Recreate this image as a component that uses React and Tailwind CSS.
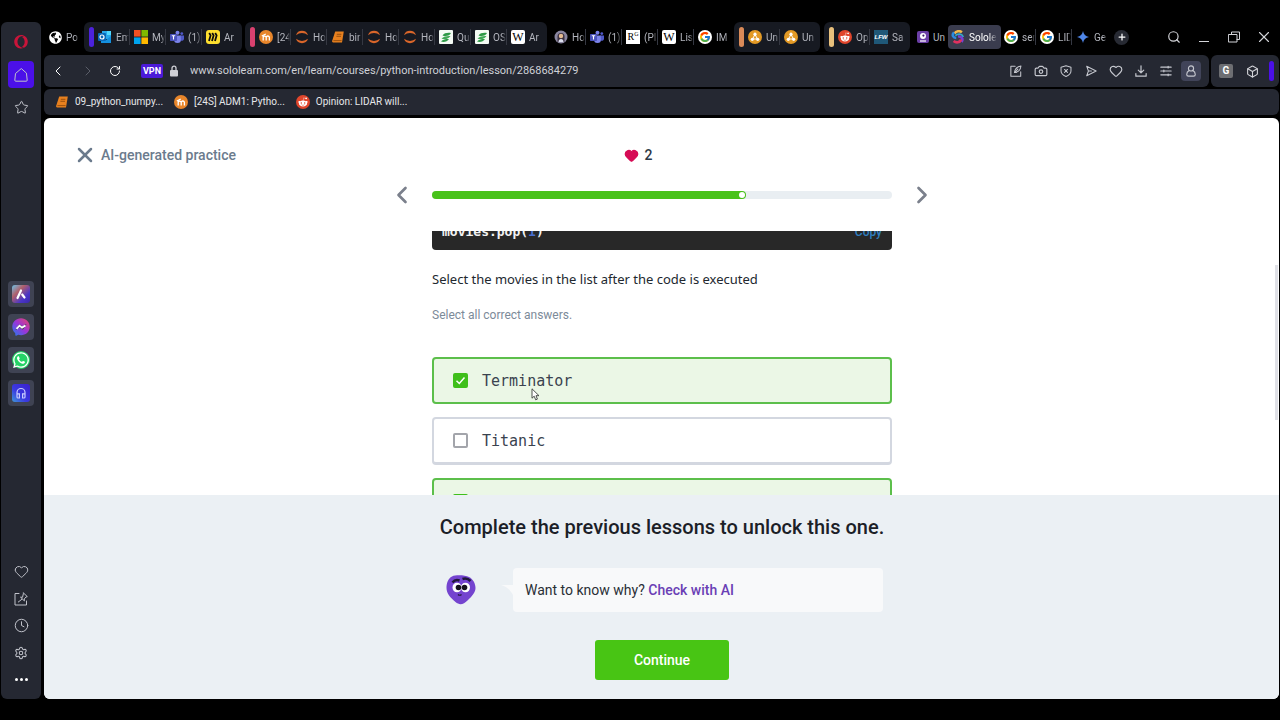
import { useState } from 'react';
import {
  Box,
  Camera,
  ChevronLeft,
  ChevronRight,
  Clock,
  Heart,
  Plus,
  RotateCw,
  Search,
  Settings,
  Star,
  X,
} from 'lucide-react';
import { FaFacebookMessenger, FaGlobeAmericas, FaOpera, FaRedditAlien, FaWhatsapp } from 'react-icons/fa';
import { FcGoogle } from 'react-icons/fc';

/* ---------- favicons ---------- */

const GlobeIcon = () => (
  <span className="flex size-3.5 items-center justify-center">
    <FaGlobeAmericas size={13} color="#fff" />
  </span>
);

const OutlookIcon = () => (
  <svg viewBox="0 0 14 14" className="size-3.5">
    <rect x="4" y="1" width="9" height="8" fill="#28a8ea" />
    <rect x="9" y="1" width="4" height="4" fill="#50d9ff" />
    <path d="M3 6l5 4 5-4v7H3z" fill="#1490df" />
    <rect x="0" y="3" width="8" height="8" rx="1" fill="#0a68b8" />
    <circle cx="4" cy="7" r="2" fill="none" stroke="#fff" strokeWidth="1.2" />
  </svg>
);

const MicrosoftIcon = () => (
  <svg viewBox="0 0 14 14" className="size-3.5">
    <path d="M0 0h6.6v6.6H0z" fill="#f25022" />
    <path d="M7.4 0H14v6.6H7.4z" fill="#7fba00" />
    <path d="M0 7.4h6.6V14H0z" fill="#00a4ef" />
    <path d="M7.4 7.4H14V14H7.4z" fill="#ffb900" />
  </svg>
);

const TeamsIcon = () => (
  <svg viewBox="0 0 14 14" className="size-3.5">
    <circle cx="7.5" cy="2.8" r="2" fill="#7b83eb" />
    <circle cx="11.8" cy="3.6" r="1.4" fill="#5059c9" />
    <path d="M4 5.5h7v4a3.5 3.5 0 0 1-7 0z" fill="#7b83eb" />
    <path d="M10.5 5.5H14v3.2a2.2 2.2 0 0 1-3 2z" fill="#5059c9" />
    <rect x="0" y="4" width="7" height="7" rx="0.8" fill="#4b53bc" />
    <path d="M1.8 5.8h3.4M3.5 5.8v3.7" stroke="#fff" strokeWidth="1.1" />
  </svg>
);

const MiroIcon = () => (
  <svg viewBox="0 0 14 14" className="size-3.5">
    <rect width="14" height="14" rx="3" fill="#ffe02f" />
    <path d="M3.2 3l1.4 2.4L3 11M6.2 3l1.4 2.4L6 11M9.2 3l1.4 2.4L9 11" fill="none" stroke="#0d0d0d" strokeWidth="1.8" />
  </svg>
);

const MoodleIcon = () => (
  <svg viewBox="0 0 14 14" className="size-3.5">
    <circle cx="7" cy="7" r="7" fill="#e8862b" />
    <path d="M4.2 10.4V7.6a1.5 1.5 0 0 1 3 0v2.8M7.2 7.6a1.6 1.6 0 0 1 3.2 0v2.8M2.8 6l4-2" fill="none" stroke="#fff" strokeWidth="1.3" />
  </svg>
);

const JupyterIcon = () => (
  <svg viewBox="0 0 14 14" className="size-3.5">
    <path d="M1 5.2a6.3 6.3 0 0 1 12 0 9.6 9.6 0 0 0-12 0z" fill="#d9662a" />
    <path d="M1 8.8a6.3 6.3 0 0 0 12 0 9.6 9.6 0 0 1-12 0z" fill="#d9662a" />
  </svg>
);

const BookIcon = () => (
  <svg viewBox="0 0 14 14" className="size-3.5">
    <path d="M4.2 1.5h8.6l-1.8 11H2.2a1.2 1.2 0 0 1-1.1-1.5z" fill="#e8811f" />
    <path d="M5.8 4.3h4.6M5.4 6.3H10M2.4 10.6h8.2" stroke="#7a3c06" strokeWidth=".7" />
  </svg>
);

const LeafIcon = () => (
  <svg viewBox="0 0 14 14" className="size-3.5">
    <rect width="14" height="14" rx="1" fill="#f4fbf4" />
    <path d="M3.5 5.5C5 3 8.5 2.5 12 3c-1 2.5-5 3.8-8.5 2.5z" fill="#2f9a47" />
    <path d="M2.5 8.6C4.5 6.3 8 5.8 11.5 6c-1.5 2.600-5.500 3.900-9 2.600z" fill="#3fa955" />
    <path d="M2 11.6C3.8 9.500 7 9 10 9.100c-1.500 2.400-5 3.600-8 2.500z" fill="#2f9a47" />
  </svg>
);

const WikiIcon = () => (
  <span className="flex size-3.5 items-center justify-center rounded-xs bg-white font-['Liberation_Serif',serif] text-[12px] leading-none text-black">
    W
  </span>
);

const ResearchIcon = () => (
  <span className="flex size-3.5 items-center justify-center bg-white font-['Liberation_Serif',serif] text-[10px] leading-none text-black">
    R<sup className="text-[6px] leading-none">G</sup>
  </span>
);

const AvatarIcon = () => (
  <svg viewBox="0 0 14 14" className="size-3.5">
    <circle cx="7" cy="7" r="6.5" fill="#8a86a0" />
    <path d="M3.5 12V6.5a3.5 3.5 0 0 1 7 0V12" fill="#3b3040" />
    <circle cx="7" cy="6" r="2.2" fill="#e3bb92" />
    <path d="M4.5 12c0-2 1-3 2.5-3s2.5 1 2.5 3z" fill="#dcdfee" />
  </svg>
);

const GoogleIcon = () => (
  <span className="flex size-3.5 items-center justify-center rounded-full bg-white">
    <FcGoogle size={12} />
  </span>
);

const TreeIcon = () => (
  <svg viewBox="0 0 14 14" className="size-3.5">
    <circle cx="7" cy="7" r="7" fill="#e39a25" />
    <path d="M7 4.500L4.500 9h5z" fill="none" stroke="#fff" strokeWidth="1" />
    <circle cx="7" cy="4.200" r="1.600" fill="#fff" />
    <circle cx="4.300" cy="9.300" r="1.600" fill="#fff" />
    <circle cx="9.700" cy="9.300" r="1.600" fill="#fff" />
  </svg>
);

const RedditIcon = () => (
  <span className="flex size-3.5 items-center justify-center rounded-full bg-[#e0452b]">
    <FaRedditAlien size={10} color="#fff" />
  </span>
);

const LfwIcon = () => (
  <span className="flex size-3.5 items-center justify-center bg-[#1f5878] font-['Liberation_Sans',sans-serif] text-[6px] leading-none font-bold text-white italic">
    LFW
  </span>
);

const PurpleIcon = () => (
  <svg viewBox="0 0 14 14" className="size-3.5">
    <rect x="1" y="1" width="12" height="12" rx="2" fill="#6b3fa6" />
    <circle cx="7" cy="6" r="3" fill="#fff" />
    <circle cx="7.4" cy="5.6" r="1.1" fill="#3c1b6b" />
    <path d="M4 11h6" stroke="#fff" strokeWidth="1.2" />
  </svg>
);

const SololearnIcon = () => (
  <svg viewBox="0 0 16 16" className="size-3.5 shrink-0">
    <path d="M12.5 2.5A6 6 0 0 0 4 4" fill="none" stroke="#f2b84b" strokeWidth="3" />
    <path d="M3.5 2.8C.5 6 2.5 9 6 9.2" fill="none" stroke="#2b8be0" strokeWidth="3" />
    <path d="M5 6.5c3-3 8-2 9 1.5" fill="none" stroke="#34a9c9" strokeWidth="2" />
    <path d="M8 7.5c4-.5 6.5 3 4 6" fill="none" stroke="#7a3fd0" strokeWidth="3" />
    <path d="M3 12.5c3 2.5 7 2 8.5-1.5" fill="none" stroke="#e0315f" strokeWidth="3" />
  </svg>
);

const GeminiIcon = () => (
  <svg viewBox="0 0 14 14" className="size-3.5">
    <path d="M7 1c.6 3.5 2.5 5.4 6 6-3.5.6-5.4 2.5-6 6-.6-3.5-2.5-5.4-6-6 3.5-.6 5.4-2.5 6-6z" fill="#4f86e8" />
  </svg>
);

/* ---------- browser icons ---------- */

const line = { fill: 'none', stroke: 'currentColor', strokeLinecap: 'round', strokeLinejoin: 'round' };

const HomeIcon = () => (
  <svg viewBox="0 0 14 14" className="size-3.5" {...line}>
    <path d="M7 .8L1.5 5.500 .8 12.200a1 1 0 0 0 1 1h10.400a1 1 0 0 0 1-1L12.500 5.500z" />
  </svg>
);

const PinboardIcon = () => (
  <svg viewBox="0 0 14 14" className="size-3.5" {...line}>
    <path d="M5 1.5H1v11.5h11.5V9" />
    <path d="M9.5 1l3.8 3.6-1.3.4-1.7 1.9.1 2L6.5 5.2l2 .1L9.3 2zM8 7.2L4.3 10" />
  </svg>
);

const PinboardSmallIcon = () => (
  <svg viewBox="0 0 14 14" className="size-3" {...line} strokeWidth="1.2">
    <path d="M6 1.5H1v11.5h11.5V8" />
    <path d="M12.8 1.2C9 1.5 6 4 5.2 8.800c4-.2 7-3 7.600-7.600zM5.200 8.800l4-4" />
  </svg>
);

const ShieldIcon = () => (
  <svg viewBox="0 0 14 14" className="size-3" {...line} strokeWidth="1.2">
    <path d="M7 .8l5.8 1.7v4.5c0 3-2.5 5-5.8 6.3C3.7 12 1.2 10 1.2 7V2.5z" />
    <path d="M5.3 5.2l3.4 3.4M8.7 5.2L5.3 8.6" />
  </svg>
);

const FlowIcon = () => (
  <svg viewBox="0 0 14 14" className="size-3" {...line} strokeWidth="1.2">
    <path d="M2 1.5L13 7 2 12.5 4 7zM4 7h3.5" />
  </svg>
);

const DownloadIcon = () => (
  <svg viewBox="0 0 14 14" className="size-3" {...line} strokeWidth="1.4">
    <path d="M7 1v8M3.8 6L7 9.2 10.2 6M1 10v3h12v-3" />
  </svg>
);

const SetupIcon = () => (
  <svg viewBox="0 0 14 14" className="size-3" {...line} strokeWidth="1.4">
    <path d="M1 2.5h12M1 7h12M1 11.5h12M9.5 1.5v2M4.5 6v2M9.5 10.5v2" />
  </svg>
);

const UserIcon = () => (
  <svg viewBox="0 0 14 14" className="size-3" {...line} strokeWidth="1.3">
    <circle cx="7" cy="4" r="3" />
    <path d="M4.8 6.5C3 7.5 2 9.3 2 11c0 1.5 1 2 2 2h6c1 0 2-.5 2-2 0-1.7-1-3.5-2.8-4.5" />
  </svg>
);

const RestoreIcon = () => (
  <svg viewBox="0 0 12 12" className="size-3" {...line}>
    <path d="M3.5 3V1h8v7.5H9M.8 3.5H9v7.5H.8z" />
  </svg>
);

const LockIcon = () => (
  <svg viewBox="0 0 10 12" className="h-3 w-2.5 shrink-0">
    <rect x="1" y="5" width="8" height="6.5" rx="1" fill="#cfd0d6" />
    <path d="M3 5V3.2a2 2 0 0 1 4 0V5" fill="none" stroke="#cfd0d6" strokeWidth="1.3" />
  </svg>
);

const AriaIcon = () => (
  <svg viewBox="0 0 18 18" className="size-[18px]">
    <defs>
      <linearGradient id="aria" x1="0" y1="0" x2="1" y2="1">
        <stop offset="0" stopColor="#6ec3e8" />
        <stop offset=".35" stopColor="#b0606a" />
        <stop offset=".7" stopColor="#4a35c8" />
        <stop offset="1" stopColor="#3b28a8" />
      </linearGradient>
    </defs>
    <rect width="18" height="18" rx="3" fill="url(#aria)" />
    <path d="M5.5 13L9 5.5M10.2 9.5l2.3 3" stroke="#fff" strokeWidth="2.2" strokeLinecap="round" />
  </svg>
);

const PlayerIcon = () => (
  <svg viewBox="0 0 18 18" className="size-[18px]">
    <defs>
      <linearGradient id="player" x1="1" y1="0" x2="0" y2="1">
        <stop offset="0" stopColor="#3a1fd0" />
        <stop offset=".6" stopColor="#3b3be0" />
        <stop offset="1" stopColor="#3f9ad8" />
      </linearGradient>
    </defs>
    <rect width="18" height="18" rx="3" fill="url(#player)" />
    <path d="M5 12V8.5a4 4 0 0 1 8 0V12M5 9.8h2.4V14H6a1 1 0 0 1-1-1zM13 9.8h-2.4V14H12a1 1 0 0 0 1-1z" fill="none" stroke="#c9ccff" strokeWidth="1.2" />
  </svg>
);

const MessengerIcon = () => (
  <svg viewBox="0 0 18 18" className="size-[18px]">
    <defs>
      <linearGradient id="msgr" x1="1" y1="0" x2="0" y2="1">
        <stop offset="0" stopColor="#e8456a" />
        <stop offset=".5" stopColor="#9a35d8" />
        <stop offset="1" stopColor="#1f7df0" />
      </linearGradient>
    </defs>
    <FaFacebookMessenger size={18} fill="url(#msgr)" />
    <path d="M4.5 10.8l3-3.2 2.5 2 3.5-2.2" fill="none" stroke="#fff" strokeWidth="1.8" />
  </svg>
);

const WhatsappIcon = () => (
  <span className="flex size-[18px] items-center justify-center rounded-full bg-[#25d366]">
    <FaWhatsapp size={18} color="#fff" />
  </span>
);

const Mascot = () => (
  <svg viewBox="0 0 30 30" className="size-[30px]">
    <path d="M6 1.5c4-1.8 13-1.3 17 .5 4 2 6.5 6.5 6.5 11 0 4-3 8-8 12.5-4 4-8 5-12 1.5C4 22.5.5 18 .5 13 .5 8 2 3.5 6 1.5z" fill="#7444cf" />
    <ellipse cx="11" cy="12.5" rx="4.5" ry="4.8" fill="#fff" />
    <ellipse cx="19.5" cy="12.5" rx="4.5" ry="4.8" fill="#fff" />
    <circle cx="12.5" cy="12.5" r="2.8" fill="#15121c" />
    <circle cx="18.5" cy="12.5" r="2.8" fill="#15121c" />
    <path d="M6.5 7.5C8 5.5 11 4.5 13.5 5.5M16.5 4c3-1 6 0 8 2" fill="none" stroke="#22183a" strokeWidth="2.6" />
    <path d="M12 19.5c1 1 2.5 1 3.5 0" fill="none" stroke="#22183a" strokeWidth="1.2" />
  </svg>
);

const Cursor = () => (
  <svg viewBox="0 0 9 13" className="h-[13px] w-[9px]">
    <path d="M1 .8v9.4l2.2-2 1.5 3.6 1.7-.7L5 7.7h3z" fill="#fff" stroke="#3b3f3b" strokeWidth=".9" />
  </svg>
);

/* ---------- browser chrome ---------- */

function Tab({ icon: Icon, title, last }) {
  return (
    <button type="button" className="flex w-9 shrink-0 items-center">
      <Icon />
      <span className="ml-1 w-[13px] overflow-hidden text-left text-[10px] whitespace-nowrap text-[#b4b6be] [mask-image:linear-gradient(to_right,#000_70%,transparent)]">
        {title}
      </span>
      {!last && <span className="h-4 w-px bg-[#353842]" />}
    </button>
  );
}

function TabGroup({ color, tabs }) {
  return (
    <div className="flex h-full shrink-0 rounded-md bg-[#171a22] py-[5px] pl-[5px]">
      <span className={`mr-1 w-[5px] rounded-full ${color}`} />
      {tabs.map(([icon, title], i) => (
        <Tab key={i} icon={icon} title={title} last={i === tabs.length - 1} />
      ))}
    </div>
  );
}

const mailTabs = [
  [OutlookIcon, 'Em'],
  [MicrosoftIcon, 'My'],
  [TeamsIcon, '(1)'],
  [MiroIcon, 'Ar'],
];

const studyTabs = [
  [MoodleIcon, '[24'],
  [JupyterIcon, 'Ho'],
  [BookIcon, 'bir'],
  [JupyterIcon, 'Ho'],
  [JupyterIcon, 'Ho'],
  [LeafIcon, 'Qu'],
  [LeafIcon, 'OS'],
  [WikiIcon, 'Ar'],
];

const looseTabs = [
  [AvatarIcon, 'Ho'],
  [TeamsIcon, '(1)'],
  [ResearchIcon, '(PI'],
  [WikiIcon, 'Lis'],
  [GoogleIcon, 'IM'],
];

const searchTabs = [
  [GoogleIcon, 'ser'],
  [GoogleIcon, 'LID'],
  [GeminiIcon, 'Ge'],
];

const bookmarks = [
  { icon: BookIcon, label: '09_python_numpy...' },
  { icon: MoodleIcon, label: '[24S] ADM1: Pytho...' },
  { icon: RedditIcon, label: 'Opinion: LIDAR will...' },
];

function TabStrip() {
  return (
    <div className="flex h-[30px] shrink-0 items-center overflow-hidden pl-1">
      <Tab icon={GlobeIcon} title="Po" last />
      <TabGroup color="bg-[#4c22dc]" tabs={mailTabs} />
      <div className="ml-[3px] h-full">
        <TabGroup color="bg-[#d9416f]" tabs={studyTabs} />
      </div>
      <div className="ml-[7px] flex">
        {looseTabs.map(([icon, title], i) => (
          <Tab key={i} icon={icon} title={title} last={i === looseTabs.length - 1} />
        ))}
      </div>
      <TabGroup color="bg-[#d98a58]" tabs={[[TreeIcon, 'Un'], [TreeIcon, 'Un']]} />
      <div className="ml-1 h-full">
        <TabGroup color="bg-[#e8c07c]" tabs={[[RedditIcon, 'Op'], [LfwIcon, 'Sa']]} />
      </div>
      <button type="button" className="ml-1.5 flex w-8 shrink-0 items-center gap-[3px] text-[10px] text-[#b4b6be]">
        <PurpleIcon />
        Un
      </button>
      <button type="button" className="flex h-6 w-[53px] shrink-0 items-center gap-1 rounded-sm bg-[#3a3c4e] pl-[3px]">
        <SololearnIcon />
        <span className="text-left text-[10px] whitespace-nowrap text-white [mask-image:linear-gradient(to_right,#000_70%,transparent)]">
          Solole
        </span>
      </button>
      <div className="ml-[3px] flex">
        {searchTabs.map(([icon, title], i) => (
          <Tab key={i} icon={icon} title={title} last={i === searchTabs.length - 1} />
        ))}
      </div>
      <button type="button" aria-label="New tab" className="ml-0.5 flex size-[15px] shrink-0 items-center justify-center rounded-full bg-[#272a33] text-white">
        <Plus size={10} strokeWidth={3} />
      </button>
      <div className="ml-auto flex h-4 text-[#d4d5da]">
        <button type="button" aria-label="Search tabs" className="flex w-[30px] items-center justify-center">
          <Search size={14} strokeWidth={2} />
        </button>
        <button type="button" aria-label="Minimize" className="flex w-[30px] items-end justify-center pb-[3px]">
          <span className="h-px w-2.5 bg-current" />
        </button>
        <button type="button" aria-label="Restore" className="flex w-[30px] items-center justify-center">
          <RestoreIcon />
        </button>
        <button type="button" aria-label="Close" className="flex w-[30px] items-center justify-center">
          <X size={18} strokeWidth={1.5} />
        </button>
      </div>
    </div>
  );
}

function ToolButton({ label, children }) {
  return (
    <button type="button" aria-label={label} className="flex h-5 w-[25px] items-center justify-center">
      {children}
    </button>
  );
}

function AddressBar() {
  const [url, setUrl] = useState('www.sololearn.com/en/learn/courses/python-introduction/lesson/2868684279');

  return (
    <div className="mt-[3px] flex h-8 shrink-0 gap-0.5">
      <div className="flex min-w-0 flex-1 items-center rounded-md bg-[#252832] pr-1.5 pl-1.5 text-[#c6c8cf]">
        <button type="button" aria-label="Back" className="flex w-4 justify-center text-white">
          <ChevronLeft size={16} strokeWidth={1.5} />
        </button>
        <button type="button" aria-label="Forward" className="ml-3.5 flex w-4 justify-center text-[#5b5e69]">
          <ChevronRight size={16} strokeWidth={1.5} />
        </button>
        <button type="button" aria-label="Reload" className="ml-[11px] flex w-4 justify-center text-white">
          <RotateCw size={12} strokeWidth={2} />
        </button>
        <button type="button" className="ml-[18px] h-[14px] w-[22px] shrink-0 rounded-xs bg-[#4b1ad8] text-[9px] leading-[14px] font-bold text-white">
          VPN
        </button>
        <span className="ml-1.5 flex">
          <LockIcon />
        </span>
        <input
          type="text"
          aria-label="Address"
          value={url}
          onChange={(e) => setUrl(e.target.value)}
          className="ml-[11px] min-w-0 flex-1 bg-transparent text-[11px] leading-5 text-[#cfd1d7] outline-none"
        />
        <ToolButton label="Pinboard"><PinboardSmallIcon /></ToolButton>
        <ToolButton label="Snapshot"><Camera size={14} strokeWidth={2} /></ToolButton>
        <ToolButton label="Ad blocker"><ShieldIcon /></ToolButton>
        <ToolButton label="My Flow"><FlowIcon /></ToolButton>
        <ToolButton label="Add bookmark"><Heart size={14} strokeWidth={2} /></ToolButton>
        <ToolButton label="Downloads"><DownloadIcon /></ToolButton>
        <ToolButton label="Easy setup"><SetupIcon /></ToolButton>
        <ToolButton label="Profile">
          <span className="flex size-5 items-center justify-center rounded-sm bg-[#414459]">
            <UserIcon />
          </span>
        </ToolButton>
      </div>
      <div className="flex items-center rounded-md bg-[#252832] pr-[5px] pl-2 text-[#d4d5da]">
        <button type="button" className="size-3.5 rounded-xs bg-[#6d6e72] text-[10px] leading-[14px] font-bold text-white">
          G
        </button>
        <button type="button" aria-label="Extensions" className="ml-3 flex w-3.5 justify-center">
          <Box size={13} strokeWidth={2} />
        </button>
        <span className="ml-2.5 h-5 w-[5px] rounded-full bg-[#4b10e8]" />
      </div>
    </div>
  );
}

function Bookmarks() {
  return (
    <nav className="mt-[2px] flex h-[26px] shrink-0 items-center gap-[11px] rounded-md bg-[#252832] pl-[11px]">
      {bookmarks.map(({ icon: Icon, label }) => (
        <a key={label} href="#" className="flex items-center gap-1.5 text-[10px] leading-4 whitespace-nowrap text-[#e6e7ea]">
          <Icon />
          {label}
        </a>
      ))}
    </nav>
  );
}

const sidebarApps = [
  ['Aria', AriaIcon],
  ['Messenger', MessengerIcon],
  ['WhatsApp', WhatsappIcon],
  ['Player', PlayerIcon],
];

function Sidebar() {
  return (
    <aside className="flex w-10 shrink-0 flex-col items-center justify-between rounded-md bg-[#252832] pt-[3px] pb-1.5 text-[#c0c2ca]">
      <div className="flex flex-col">
        <button type="button" aria-label="Opera" className="flex h-[33px] items-center justify-center">
          <FaOpera size={14} color="#c9153a" />
        </button>
        <button type="button" aria-label="Home" className="my-[3px] flex h-[27px] w-[26px] items-center justify-center rounded-sm bg-[#4b10e8]">
          <HomeIcon />
        </button>
        <button type="button" aria-label="Bookmarks" className="flex h-[33px] items-center justify-center">
          <Star size={15} strokeWidth={1.6} />
        </button>
      </div>
      <div className="flex flex-col gap-[7px] pt-1">
        {sidebarApps.map(([label, Icon]) => (
          <button key={label} type="button" aria-label={label} className="flex size-[26px] items-center justify-center rounded-sm bg-[#3f4353]">
            <Icon />
          </button>
        ))}
      </div>
      <div className="flex flex-col">
        <button type="button" aria-label="Favourites" className="flex h-[27px] w-[26px] items-center justify-center">
          <Heart size={15} strokeWidth={1.6} />
        </button>
        <button type="button" aria-label="Pinboards" className="flex h-[27px] w-[26px] items-center justify-center">
          <PinboardIcon />
        </button>
        <button type="button" aria-label="History" className="flex h-[27px] w-[26px] items-center justify-center">
          <Clock size={15} strokeWidth={1.6} />
        </button>
        <button type="button" aria-label="Settings" className="flex h-[27px] w-[26px] items-center justify-center">
          <Settings size={14} strokeWidth={1.8} />
        </button>
        <button type="button" aria-label="More" className="flex h-[27px] w-[26px] items-center justify-center gap-[2px]">
          <span className="size-[3px] rounded-full bg-white" />
          <span className="size-[3px] rounded-full bg-white" />
          <span className="size-[3px] rounded-full bg-white" />
        </button>
      </div>
    </aside>
  );
}

/* ---------- lesson ---------- */

function Option({ label, checked, onChange, children }) {
  return (
    <label
      className={`relative flex shrink-0 items-center rounded-sm border-2 pl-[19px] font-['DejaVu_Sans_Mono',monospace] text-[15px] leading-5 text-[#3a434f] ${
        checked ? 'h-[47px] border-[#5cbf4b] bg-[#ebf7e6]' : 'h-12 border-[#d3d7e0] border-b-[3px] bg-white'
      }`}
    >
      <span className="relative flex size-[15px]">
        <input
          type="checkbox"
          checked={checked}
          onChange={onChange}
          className="size-[15px] appearance-none rounded-xs border-2 border-[#a3a5ab] bg-white checked:border-[#3fbf1b] checked:bg-[#3fbf1b]"
        />
        {checked && (
          <svg viewBox="0 0 15 15" className="pointer-events-none absolute inset-0 size-[15px]">
            <path d="M3.5 7.8l2.8 2.7L11.5 4.5" fill="none" stroke="#fff" strokeWidth="1.5" />
          </svg>
        )}
      </span>
      <span className="ml-3.5">{label}</span>
      {children}
    </label>
  );
}

function Lesson() {
  const [answers, setAnswers] = useState({ Terminator: true, Titanic: false, Matrix: true });
  const progress = 314 / 460;

  const toggle = (name) => setAnswers((current) => ({ ...current, [name]: !current[name] }));

  return (
    <main className="relative mt-[3px] flex min-h-0 flex-1 flex-col overflow-hidden rounded-md bg-white pl-px">
      <header className="grid shrink-0 grid-cols-[1fr_auto_1fr] items-center pt-6 pl-7">
        <div className="flex items-center gap-1 text-[#6b7b8d]">
          <button type="button" aria-label="Close lesson">
            <X size={24} strokeWidth={2.5} />
          </button>
          <h1 className="text-[14px] leading-[26px] font-medium">AI-generated practice</h1>
        </div>
        <div className="mr-[76px] flex items-center gap-1.5 text-[14px] font-medium text-[#2d3846]">
          <Heart size={15} fill="#d60c55" color="#d60c55" />2
        </div>
      </header>

      <div className="flex shrink-0 items-center justify-center gap-4 pt-[13px] text-[#7b808c]">
        <button type="button" aria-label="Previous" className="flex">
          <ChevronLeft size={28} strokeWidth={2.3} />
        </button>
        <div role="progressbar" aria-valuenow={68} className="h-2 w-full max-w-[460px] rounded-full bg-[#e9eef2]">
          <div className="flex h-full items-center justify-end rounded-full bg-[#48c21a] pr-px" style={{ width: `${progress * 100}%` }}>
            <span className="size-1.5 rounded-full bg-white" />
          </div>
        </div>
        <button type="button" aria-label="Next" className="flex">
          <ChevronRight size={28} strokeWidth={2.3} />
        </button>
      </div>

      <section className="mx-auto mt-[22px] flex min-h-0 w-full max-w-[460px] flex-1 flex-col overflow-hidden">
        <div className="flex h-[19px] shrink-0 items-end justify-between overflow-hidden rounded-b-sm bg-[#282828] px-2.5 pb-2">
          <code className="font-['DejaVu_Sans_Mono',monospace] text-[13px] leading-5 font-bold text-[#f2f2f2]">
            movies.pop(<span className="text-[#4a6fd0]">1</span>)
          </code>
          <button type="button" className="text-[12px] leading-5 font-medium text-[#2f7fc0]">
            Copy
          </button>
        </div>
        <p className="mt-[19px] shrink-0 font-['Noto_Sans',sans-serif] text-[13px] leading-5 text-[#22282f]">
          Select the movies in the list after the code is executed
        </p>
        <p className="mt-4 shrink-0 text-[12px] leading-5 text-[#7c8a99]">Select all correct answers.</p>
        <div className="mt-8 flex flex-col gap-[13px]">
          <Option label="Terminator" checked={answers.Terminator} onChange={() => toggle('Terminator')}>
            <span className="pointer-events-none absolute top-[29px] left-[97px]">
              <Cursor />
            </span>
          </Option>
          <Option label="Titanic" checked={answers.Titanic} onChange={() => toggle('Titanic')} />
          <Option label="" checked={answers.Matrix} onChange={() => toggle('Matrix')} />
        </div>
      </section>

      <span className="absolute top-[147px] right-px h-[155px] w-[3px] bg-[#dfe0e6]" />

      <footer className="-ml-px flex shrink-0 flex-col items-center bg-[#ebf0f4] pt-[18px] pb-[19px] pl-px">
        <h2 className="text-[20px] leading-7 font-medium text-[#1b2027]">Complete the previous lessons to unlock this one.</h2>
        <div className="mt-[27px] flex w-full max-w-[442px] items-center pl-[5px]">
          <Mascot />
          <svg viewBox="0 0 12 10" className="ml-[25px] h-2.5 w-3">
            <path d="M0 0h12v10C9 5 6 1.5 0 0z" fill="#f8f9fa" />
          </svg>
          <p className="flex-1 rounded-sm bg-[#f8f9fa] px-3 py-3 text-[14px] leading-5 text-[#2a2f36]">
            Want to know why?{' '}
            <a href="#" className="font-medium text-[#6a3fb5]">
              Check with AI
            </a>
          </p>
        </div>
        <button type="button" className="mt-7 h-10 w-[134px] rounded-[3px] bg-[#48c514] text-[14px] font-medium text-white">
          Continue
        </button>
      </footer>
    </main>
  );
}

export default function App() {
  return (
    <div className="flex h-screen gap-[3px] bg-black px-px pt-[22px] pb-[21px] font-[Roboto,sans-serif]">
      <Sidebar />
      <div className="flex min-w-0 flex-1 flex-col">
        <TabStrip />
        <AddressBar />
        <Bookmarks />
        <Lesson />
      </div>
    </div>
  );
}
